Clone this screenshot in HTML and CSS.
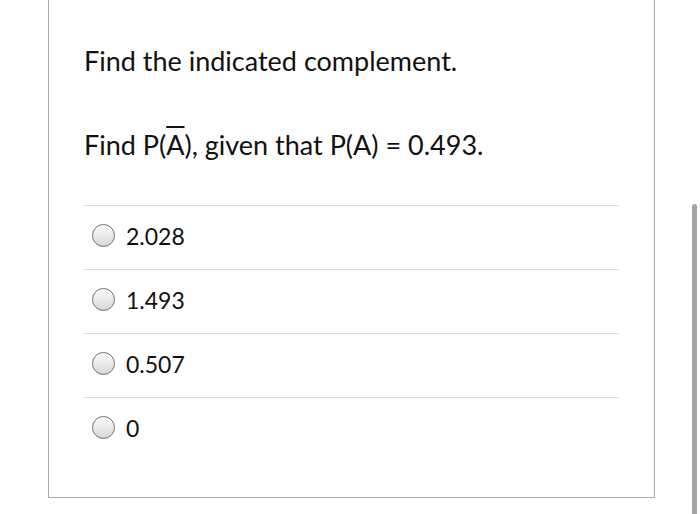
FILE: index.html
```html
<!DOCTYPE html>
<html>
<head>
<meta charset="utf-8">
<link rel="stylesheet" href="styles.css">
</head>
<body>
<div class="card">
  <p class="q q-title">Find the indicated complement.</p>
  <p class="q q-body">Find P(<span class="bar">A</span>), given that P(A) = 0.493.</p>
  <ul class="options">
    <li class="option"><span class="radio"></span><span class="label">2.028</span></li>
    <li class="option"><span class="radio"></span><span class="label">1.493</span></li>
    <li class="option"><span class="radio"></span><span class="label">0.507</span></li>
    <li class="option"><span class="radio"></span><span class="label">0</span></li>
  </ul>
</div>
<div class="scrollbar"></div>
</body>
</html>
```

FILE: styles.css
```css
html, body {
  margin: 0;
  padding: 0;
  background: #ffffff;
}
body {
  font-family: Lato, "Open Sans", sans-serif;
  color: #111111;
  overflow: hidden;
}
.card {
  margin-left: 48px;
  width: 535px;
  padding: 45px 35px 36px 35px;
  border: 1px solid #ababab;
  border-top: none;
  background: #fff;
}
.q {
  margin: 0;
  font-size: 27px;
  line-height: 32px;
}
.q-body {
  margin-top: 52px;
}
.bar {
  text-decoration: overline;
  text-decoration-thickness: 1.5px;
}
.options {
  list-style: none;
  margin: 44px 0 0 0;
  padding: 0;
}
.option {
  display: flex;
  align-items: center;
  gap: 11px;
  border-top: 1px solid #dcdcdc;
  padding: 18px 0 22px 8px;
  height: 23px;
}
.radio {
  width: 21px;
  height: 21px;
  border-radius: 50%;
  border: 1px solid #6f6f6f;
  background: linear-gradient(#fbfbfb, #d8d8d8);
  flex: none;
}
.label {
  font-size: 23px;
  line-height: 24px;
}
.scrollbar {
  position: absolute;
  left: 692px;
  top: 204px;
  width: 5px;
  height: 320px;
  border-radius: 3px;
  background: #a3a3a3;
}
```
